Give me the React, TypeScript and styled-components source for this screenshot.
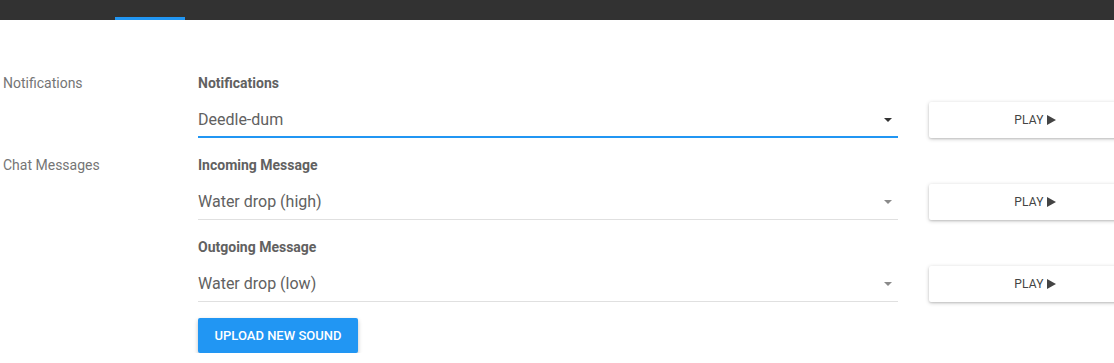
import styled, { createGlobalStyle } from 'styled-components';

const GlobalStyle = createGlobalStyle`
  html, body {
    margin: 0;
    padding: 0;
    background: #fff;
    overflow: hidden;
    font-family: Roboto, "Liberation Sans", Arial, sans-serif;
  }
`;

const TopBar = styled.div`
  height: 20px;
  background: #323232;
  display: flex;
  align-items: flex-end;
  padding-left: 115px;
`;

const TabIndicator = styled.div`
  width: 70px;
  height: 3px;
  background: #2196f3;
`;

const Content = styled.div`
  padding: 54px 0 0 3px;
  display: grid;
  grid-template-columns: 195px 700px 212px;
  align-items: start;
`;

const SectionLabel = styled.div<{ $offset?: number }>`
  font-size: 14px;
  line-height: 18px;
  color: #757575;
  margin-top: ${(p) => p.$offset ?? 0}px;
`;

const Fields = styled.div`
  display: flex;
  flex-direction: column;
`;

const Field = styled.div`
  display: flex;
  flex-direction: column;
  margin-bottom: 18px;
`;

const FieldLabel = styled.div`
  font-size: 14px;
  font-weight: 700;
  line-height: 18px;
  color: #616161;
  margin-bottom: 10px;
`;

const Select = styled.div<{ $focused?: boolean }>`
  height: 36px;
  box-sizing: border-box;
  display: flex;
  align-items: center;
  justify-content: space-between;
  font-size: 16px;
  color: #616161;
  border-bottom: ${(p) => (p.$focused ? '2px solid #2196f3' : '1px solid #e0e0e0')};
  padding-top: ${(p) => (p.$focused ? '1px' : '0')};
`;

const Caret = styled.span<{ $focused?: boolean }>`
  width: 0;
  height: 0;
  margin-right: 6px;
  border-left: 4px solid transparent;
  border-right: 4px solid transparent;
  border-top: 4px solid ${(p) => (p.$focused ? '#333' : '#8a8a8a')};
`;

const Buttons = styled.div`
  display: flex;
  flex-direction: column;
  padding-top: 28px;
  margin-left: 31px;
`;

const PlayButton = styled.button`
  height: 36px;
  width: 212px;
  margin-bottom: 46px;
  border: none;
  border-radius: 2px;
  background: #fff;
  color: #444;
  font-family: Roboto, "Liberation Sans", Arial, sans-serif;
  font-size: 12px;
  letter-spacing: 0.2px;
  box-shadow: 0 1px 4px rgba(0, 0, 0, 0.2), 0 1px 2px rgba(0, 0, 0, 0.12);
  display: flex;
  align-items: center;
  justify-content: center;
  gap: 3px;
`;

const UploadButton = styled.button`
  align-self: flex-start;
  height: 35px;
  width: 160px;
  margin-top: -2px;
  border: none;
  border-radius: 2px;
  background: #2196f3;
  color: #fff;
  font-family: Roboto, "Liberation Sans", Arial, sans-serif;
  font-size: 13px;
  font-weight: 500;
  box-shadow: 0 2px 4px rgba(0, 0, 0, 0.25);
`;

const sounds = [
  { label: 'Notifications', value: 'Deedle-dum', focused: true },
  { label: 'Incoming Message', value: 'Water drop (high)' },
  { label: 'Outgoing Message', value: 'Water drop (low)' },
];

const PlayIcon = () => (
  <svg width="9" height="10" viewBox="0 0 9 10">
    <path d="M0 0 L9 5 L0 10 Z" fill="#444" />
  </svg>
);

export default function App() {
  return (
    <>
      <GlobalStyle />
      <TopBar>
        <TabIndicator />
      </TopBar>
      <Content>
        <div>
          <SectionLabel>Notifications</SectionLabel>
          <SectionLabel $offset={64}>Chat Messages</SectionLabel>
        </div>
        <Fields>
          {sounds.map((s) => (
            <Field key={s.label}>
              <FieldLabel>{s.label}</FieldLabel>
              <Select $focused={s.focused}>
                {s.value}
                <Caret $focused={s.focused} />
              </Select>
            </Field>
          ))}
          <UploadButton>UPLOAD NEW SOUND</UploadButton>
        </Fields>
        <Buttons>
          {sounds.map((s) => (
            <PlayButton key={s.label}>
              PLAY <PlayIcon />
            </PlayButton>
          ))}
        </Buttons>
      </Content>
    </>
  );
}
